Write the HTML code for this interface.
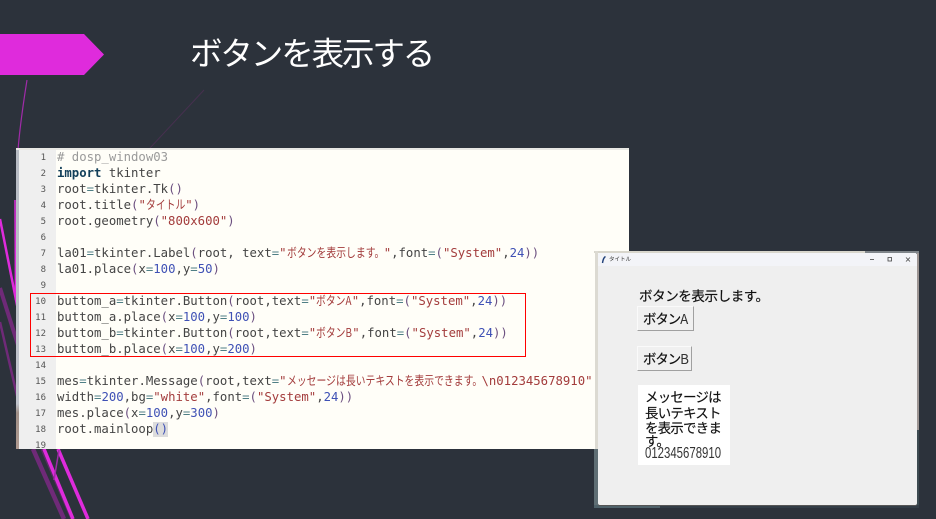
<!DOCTYPE html>
<html lang="ja">
<head>
<meta charset="utf-8">
<title>ボタンを表示する</title>
<style>
html,body{margin:0;padding:0}
body{width:936px;height:519px;overflow:hidden;background:#2c323b;position:relative;font-family:"Liberation Sans","Noto Sans CJK JP",sans-serif}
.abs{position:absolute}
#bg{position:absolute;left:0;top:0}
#title{position:absolute;left:190px;top:28px;font-size:32.5px;line-height:48px;letter-spacing:-2.1px;color:#fff;white-space:nowrap;font-family:"Noto Sans CJK JP",sans-serif;font-weight:400}
#panel{position:absolute;left:16px;top:148px;width:613px;height:301px;background:#fffef8;overflow:hidden;filter:blur(.3px)}
#strip{position:absolute;left:0;top:0;width:3px;height:301px;background:linear-gradient(#b8bcc4 0,#c0c4cc 85%,#a09088 88%,#b09a90 100%)}
#gutter{position:absolute;left:3px;top:0;width:37px;height:301px;background:#efefef}
#top{position:absolute;left:0;top:0;width:613px;height:2px;background:#e8e8e4}
.ln{position:absolute;left:3px;width:27px;text-align:right;font:9px/16px "DejaVu Sans Mono",monospace;color:#555}
.c{position:absolute;left:41px;font:12.3px/16px "DejaVu Sans Mono",monospace;color:#444;white-space:pre}
.s{color:#a33c3c}.n{color:#3f51b5}.p{color:#6c5080}.o{color:#4f7f86}.k{color:#123f5a;font-weight:bold}.g{color:#9a9a9a}
.j{display:inline-block;font:12.3px/16px "Noto Sans CJK JP",sans-serif;color:#a33c3c;transform:scaleX(.8);transform-origin:0 50%;margin-right:calc(var(--n) * -2.46px)}
#hl{position:absolute;left:137px;top:274px;width:15px;height:15px;background:#dcdcdc}
#red{position:absolute;left:30px;top:293px;width:494px;height:62px;border:1px solid #f00}
.edge{position:absolute}
#win{position:absolute;left:598px;top:253px;width:319px;height:252px;background:#efefef;border-radius:2px;box-shadow:0 1px 0 #555;filter:blur(.25px)}
#bar{position:absolute;left:0;top:0;width:319px;height:13px;background:#f3f4f8;border-radius:2px 2px 0 0}
.w{position:absolute;font-family:"Noto Sans CJK JP",sans-serif;color:#111;white-space:nowrap}
.btn{position:absolute;background:#f0f0f0;border-top:1px solid #fafafa;border-left:1px solid #fafafa;border-right:1px solid #a0a0a0;border-bottom:1px solid #a0a0a0;box-sizing:border-box}
#msg{position:absolute;left:40px;top:132px;width:92px;height:80px;background:#fff}
.m{left:47px;font-size:13.4px;line-height:20px;letter-spacing:-.7px;-webkit-text-stroke:.15px #111}
.b{font-size:13.4px;line-height:20px;letter-spacing:-1px;-webkit-text-stroke:.2px #111}
.b span{-webkit-text-stroke:0;color:#333}
</style>
</head>
<body>
<svg id="bg" width="936" height="519" viewBox="0 0 936 519" fill="none">
  <path d="M27 80C23 105 20 125 18 150" stroke="#a02ba8" stroke-width="1.2"/>
  <path d="M204 90L150 148" stroke="#46304f" stroke-width="1"/>
  <path d="M15 200L15.500 300" stroke="#df2bdc" stroke-width="1.500"/>
  <path d="M0 219L18 310" stroke="#df2bdc" stroke-width="2.500"/>
  <path d="M0 288L18 345" stroke="#6f2a78" stroke-width="4"/>
  <path d="M0 322L18 400" stroke="#6f2a78" stroke-width="2.500"/>
  <path d="M33 449L64 519" stroke="#6f2a78" stroke-width="4.500"/>
  <path d="M42 449L72 519" stroke="#5c2c66" stroke-width="3"/>
  <path d="M44 449L73 519" stroke="#df2bdc" stroke-width="3.500"/>
  <path d="M58 449L88 519" stroke="#df2bdc" stroke-width="3.500"/>
  <path d="M59 450L54 480" stroke="#a02ba8" stroke-width="1.500"/>
  <path d="M0 34H84L104 54.500L84 75H0Z" fill="#df2bdc"/>
</svg>
<div id="title">ボタンを表示する</div>

<div id="panel">
  <div id="strip"></div>
  <div id="gutter"></div>
  <div id="hl"></div>
  <div class="ln" style="top:2px">1</div>
  <div class="ln" style="top:18px">2</div>
  <div class="ln" style="top:34px">3</div>
  <div class="ln" style="top:50px">4</div>
  <div class="ln" style="top:66px">5</div>
  <div class="ln" style="top:82px">6</div>
  <div class="ln" style="top:98px">7</div>
  <div class="ln" style="top:114px">8</div>
  <div class="ln" style="top:130px">9</div>
  <div class="ln" style="top:146px">10</div>
  <div class="ln" style="top:162px">11</div>
  <div class="ln" style="top:178px">12</div>
  <div class="ln" style="top:194px">13</div>
  <div class="ln" style="top:210px">14</div>
  <div class="ln" style="top:226px">15</div>
  <div class="ln" style="top:242px">16</div>
  <div class="ln" style="top:258px">17</div>
  <div class="ln" style="top:274px">18</div>
  <div class="ln" style="top:290px">19</div>

  <div class="c g" style="top:1px"># dosp_window03</div>
  <div class="c" style="top:17px"><span class="k">import</span> tkinter</div>
  <div class="c" style="top:33px">root<span class="o">=</span>tkinter.Tk<span class="p">()</span></div>
  <div class="c" style="top:48px">root.title<span class="p">(</span><span class="s">"</span><span class="j" style="--n:4">タイトル</span><span class="s">"</span><span class="p">)</span></div>
  <div class="c" style="top:65px">root.geometry<span class="p">(</span><span class="s">"800x600"</span><span class="p">)</span></div>
  <div class="c" style="top:96px">la01<span class="o">=</span>tkinter.Label<span class="p">(</span>root, text<span class="o">=</span><span class="s">"</span><span class="j" style="--n:10">ボタンを表示します。</span><span class="s">"</span>,font<span class="o">=</span><span class="p">(</span><span class="s">"System"</span>,<span class="n">24</span><span class="p">))</span></div>
  <div class="c" style="top:113px">la01.place<span class="p">(</span>x<span class="o">=</span><span class="n">100</span>,y<span class="o">=</span><span class="n">50</span><span class="p">)</span></div>
  <div class="c" style="top:144px">buttom_a<span class="o">=</span>tkinter.Button<span class="p">(</span>root,text<span class="o">=</span><span class="s">"</span><span class="j" style="--n:3.6">ボタンA</span><span class="s">"</span>,font<span class="o">=</span><span class="p">(</span><span class="s">"System"</span>,<span class="n">24</span><span class="p">))</span></div>
  <div class="c" style="top:161px">buttom_a.place<span class="p">(</span>x<span class="o">=</span><span class="n">100</span>,y<span class="o">=</span><span class="n">100</span><span class="p">)</span></div>
  <div class="c" style="top:176px">buttom_b<span class="o">=</span>tkinter.Button<span class="p">(</span>root,text<span class="o">=</span><span class="s">"</span><span class="j" style="--n:3.6">ボタンB</span><span class="s">"</span>,font<span class="o">=</span><span class="p">(</span><span class="s">"System"</span>,<span class="n">24</span><span class="p">))</span></div>
  <div class="c" style="top:193px">buttom_b.place<span class="p">(</span>x<span class="o">=</span><span class="n">100</span>,y<span class="o">=</span><span class="n">200</span><span class="p">)</span></div>
  <div class="c" style="top:224px">mes<span class="o">=</span>tkinter.Message<span class="p">(</span>root,text<span class="o">=</span><span class="s">"</span><span class="j" style="--n:20">メッセージは長いテキストを表示できます。</span><span class="s">\n012345678910"</span></div>
  <div class="c" style="top:241px">width<span class="o">=</span><span class="n">200</span>,bg<span class="o">=</span><span class="s">"white"</span>,font<span class="o">=</span><span class="p">(</span><span class="s">"System"</span>,<span class="n">24</span><span class="p">))</span></div>
  <div class="c" style="top:257px">mes.place<span class="p">(</span>x<span class="o">=</span><span class="n">100</span>,y<span class="o">=</span><span class="n">300</span><span class="p">)</span></div>
  <div class="c" style="top:273px">root.mainloop<span class="n">()</span></div>
  <div id="top"></div>
</div>
<div id="red"></div>

<div class="edge" style="left:594px;top:251px;width:271px;height:2px;background:#d8d6cc"></div>
<div class="edge" style="left:865px;top:251px;width:54px;height:2px;background:#7f858a"></div>
<div class="edge" style="left:595px;top:251px;width:3px;height:198px;background:#dcdad2"></div>
<div class="edge" style="left:594px;top:449px;width:4px;height:59px;background:#5f6e74"></div>
<div class="edge" style="left:917px;top:253px;width:2px;height:177px;background:#9c9492"></div>
<div class="edge" style="left:917px;top:430px;width:2px;height:76px;background:#3c4a50"></div>
<div class="edge" style="left:594px;top:505px;width:66px;height:3px;background:#4f626a"></div>
<div class="edge" style="left:660px;top:505px;width:259px;height:3px;background:#333d46"></div>

<div id="win">
  <div id="bar">
    <svg class="abs" style="left:3px;top:3px" width="6" height="8" viewBox="0 0 6 8"><path d="M4.500 0.500C2.500 1.500 2 4 1.500 7" stroke="#1f3f78" stroke-width="1.400" fill="none"/></svg>
    <div class="w" style="left:11px;top:2px;font-size:5.500px;line-height:9px;color:#333">タイトル</div>
    <svg class="abs" style="left:270px;top:2px" width="48" height="10" viewBox="0 0 48 10" fill="none" stroke="#444" stroke-width="0.800">
      <path d="M2 4.500H6"/>
      <rect x="20" y="2.500" width="3.500" height="3.500"/>
      <path d="M38 2.500L42 6.500M42 2.500L38 6.500"/>
    </svg>
  </div>
  <div class="w" style="left:41px;top:32px;font-size:13.500px;line-height:20px;letter-spacing:-.4px;-webkit-text-stroke:.2px #111">ボタンを表示します。</div>
  <div class="btn" style="left:39px;top:53px;width:57px;height:25px"></div>
  <div class="w b" style="left:45px;top:55px">ボタン<span>A</span></div>
  <div class="btn" style="left:39px;top:93px;width:55px;height:25px"></div>
  <div class="w b" style="left:45px;top:95px">ボタン<span>B</span></div>
  <div id="msg"></div>
  <div class="w m" style="top:133px">メッセージは</div>
  <div class="w m" style="top:149px">長いテキスト</div>
  <div class="w m" style="top:164px">を表示できま</div>
  <div class="w m" style="top:177px">す。</div>
  <div class="w" style="left:47px;top:192px;font-family:'Liberation Sans',sans-serif;font-size:15.500px;line-height:18px;color:#333;transform:scaleX(.735);transform-origin:0 50%">012345678910</div>
</div>
</body>
</html>
